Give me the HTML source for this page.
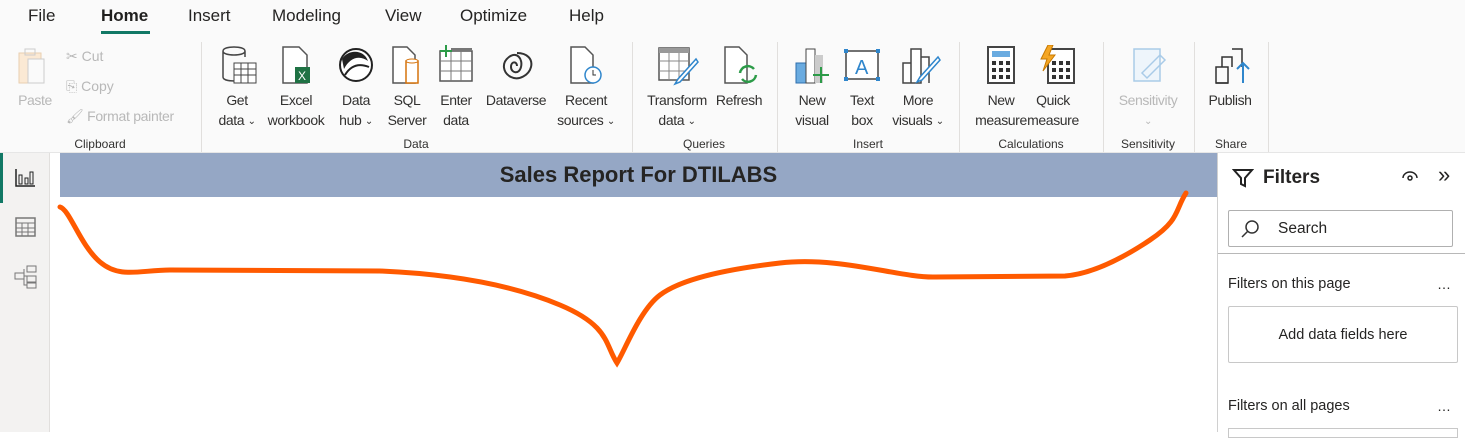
<!DOCTYPE html>
<html><head><meta charset="utf-8"><style>
*{margin:0;padding:0;box-sizing:border-box}
body{width:1465px;height:432px;overflow:hidden;background:#fff;font-family:"Liberation Sans",sans-serif;position:relative;color:#252423}
.ab{position:absolute}
.tab{position:absolute;top:6px;font-size:17px;color:#252423}
.lbl{position:absolute;top:90px;font-size:14px;letter-spacing:-0.4px;line-height:20px;text-align:center;color:#323130;white-space:nowrap;transform:translateX(-50%)}
.dis{color:#b8b8b8}
.grp{position:absolute;top:137px;font-size:12px;color:#323130;transform:translateX(-50%)}
.sep{position:absolute;top:42px;width:1px;height:110px;background:#e1dfdd}
svg.i{position:absolute;top:45px}
.cv{font-size:10px;vertical-align:1px}
</style></head><body>
<div class="ab" style="left:0;top:0;width:1465px;height:153px;background:#fafafa;border-bottom:1px solid #e6e6e6"></div>
<div class="tab" style="left:28px">File</div>
<div class="tab" style="left:101px;font-weight:bold;color:#201f1e">Home</div>
<div class="ab" style="left:101px;top:31px;width:49px;height:3px;background:#117865"></div>
<div class="tab" style="left:188px">Insert</div>
<div class="tab" style="left:272px">Modeling</div>
<div class="tab" style="left:385px">View</div>
<div class="tab" style="left:460px">Optimize</div>
<div class="tab" style="left:569px">Help</div>

<svg class="i" style="left:16px" width="42" height="42"><rect x="3" y="8" width="22" height="30" fill="#fbe9d4" stroke="#e8cfb0"/><rect x="12" y="14" width="16" height="24" fill="#fafafa" stroke="#ccc"/><rect x="9" y="4" width="10" height="6" fill="none" stroke="#ccc"/></svg>
<div class="ab dis" style="left:66px;top:48px;font-size:14px">✂ Cut</div>
<div class="ab dis" style="left:66px;top:78px;font-size:14px">⎘ Copy</div>
<div class="ab dis" style="left:66px;top:108px;font-size:14px;letter-spacing:-0.3px">🖌 Format painter</div>

<svg class="i" style="left:220px" width="40" height="42"><path d="M3 6v26c0 3 6 4 12 4M3 6c0-3 6-4 11-4s11 1 11 4v6M3 6c0 3 6 4 11 4s11-1 11-4" fill="none" stroke="#444" stroke-width="1.5"/><rect x="14" y="18" width="22" height="20" fill="#fff" stroke="#444"/><path d="M14 24h22M14 30h22M21 18v20M28 18v20" stroke="#444"/></svg>
<svg class="i" style="left:280px" width="40" height="42"><path d="M3 2h16l8 8v28H3z" fill="#fff" stroke="#555" stroke-width="1.5"/><rect x="15" y="22" width="15" height="16" fill="#1f7244"/><text x="18" y="35" fill="#fff" font-size="12" font-family="Liberation Sans">X</text></svg>
<svg class="i" style="left:337px" width="40" height="42"><circle cx="19" cy="20" r="16" fill="#fff" stroke="#222" stroke-width="2"/><path d="M5 14c6-10 22-10 26 2-8-6-18-4-24 8z" fill="#222"/><path d="M8 30c6-10 14-12 24-8" fill="none" stroke="#222" stroke-width="2"/></svg>
<svg class="i" style="left:390px" width="40" height="42"><path d="M3 2h14l8 8v28H3z" fill="#fff" stroke="#555" stroke-width="1.5"/><path d="M16 16h12v22h-12z" fill="#fff" stroke="#d5730c" stroke-width="1.5"/><ellipse cx="22" cy="16" rx="6" ry="2" fill="#fff" stroke="#d5730c"/></svg>
<svg class="i" style="left:437px" width="40" height="42"><rect x="3" y="6" width="32" height="30" fill="#fff" stroke="#555" stroke-width="1.5"/><rect x="14" y="3" width="21" height="3" fill="#777"/><path d="M3 16h32M3 26h32M14 6v30M24 6v30" stroke="#777"/><path d="M9 0v12M3 6h12" stroke="#2c9b48" stroke-width="2"/></svg>
<svg class="i" style="left:497px" width="40" height="42"><path d="M20 8c10 0 16 6 14 14s-12 14-20 10S4 18 12 12s14 2 12 10-10 6-10 0 6-6 6-1" fill="none" stroke="#333" stroke-width="2"/></svg>
<svg class="i" style="left:568px" width="40" height="42"><path d="M3 2h14l8 8v28H3z" fill="#fff" stroke="#555" stroke-width="1.5"/><circle cx="25" cy="30" r="8" fill="#fff" stroke="#2f86cc" stroke-width="1.5"/><path d="M25 25v5h3" stroke="#333" fill="none"/></svg>

<svg class="i" style="left:656px" width="44" height="42"><rect x="3" y="3" width="30" height="32" fill="#fff" stroke="#555" stroke-width="1.5"/><rect x="3" y="3" width="30" height="5" fill="#999"/><path d="M3 16h30M3 26h30M13 8v27M23 8v27" stroke="#888"/><path d="M40 14L22 34l-3 5 5-2 18-20z" fill="#fff" stroke="#2f86cc" stroke-width="1.5"/></svg>
<svg class="i" style="left:722px" width="40" height="42"><path d="M3 2h14l8 8v28H3z" fill="#fff" stroke="#555" stroke-width="1.5"/><path d="M18 28a8 8 0 0 1 14-4M34 30a8 8 0 0 1-14 4" fill="none" stroke="#2c9b48" stroke-width="2.5"/></svg>

<svg class="i" style="left:793px" width="40" height="42"><rect x="3" y="18" width="10" height="20" fill="#6aabe0" stroke="#2f6fad"/><rect x="13" y="4" width="9" height="34" fill="#fff" stroke="#444"/><rect x="22" y="10" width="8" height="28" fill="#ccc"/><path d="M28 22v16M20 30h16" stroke="#2c9b48" stroke-width="2"/></svg>
<svg class="i" style="left:843px" width="40" height="42"><rect x="3" y="6" width="32" height="28" fill="#fff" stroke="#444" stroke-width="1.5"/><text x="12" y="29" fill="#2f86cc" font-size="20" font-family="Liberation Sans">A</text><rect x="1" y="4" width="4" height="4" fill="#2f86cc"/><rect x="33" y="4" width="4" height="4" fill="#2f86cc"/><rect x="1" y="32" width="4" height="4" fill="#2f86cc"/><rect x="33" y="32" width="4" height="4" fill="#2f86cc"/></svg>
<svg class="i" style="left:900px" width="42" height="42"><path d="M3 18h8v20H3zM11 4h10v34H11zM21 12h8v26" fill="#fff" stroke="#444" stroke-width="1.5"/><path d="M38 12L20 32l-3 5 5-2 18-20z" fill="#fff" stroke="#2f86cc" stroke-width="1.5"/></svg>

<svg class="i" style="left:985px" width="34" height="42"><rect x="3" y="2" width="26" height="36" fill="#fff" stroke="#444" stroke-width="2"/><rect x="7" y="6" width="18" height="6" fill="#6aabe0"/><g fill="#333"><rect x="7" y="16" width="4" height="4"/><rect x="14" y="16" width="4" height="4"/><rect x="21" y="16" width="4" height="4"/><rect x="7" y="23" width="4" height="4"/><rect x="14" y="23" width="4" height="4"/><rect x="21" y="23" width="4" height="4"/><rect x="7" y="30" width="4" height="4"/><rect x="14" y="30" width="4" height="4"/><rect x="21" y="30" width="4" height="4"/></g></svg>
<svg class="i" style="left:1038px" width="40" height="42"><rect x="10" y="4" width="26" height="34" fill="#fff" stroke="#444" stroke-width="2"/><g fill="#333"><rect x="14" y="16" width="4" height="4"/><rect x="21" y="16" width="4" height="4"/><rect x="28" y="16" width="4" height="4"/><rect x="14" y="23" width="4" height="4"/><rect x="21" y="23" width="4" height="4"/><rect x="28" y="23" width="4" height="4"/><rect x="14" y="30" width="4" height="4"/><rect x="21" y="30" width="4" height="4"/><rect x="28" y="30" width="4" height="4"/></g><path d="M10 0L3 14h6L5 26l12-16h-6l4-10z" fill="#f5a623" stroke="#c77800"/></svg>
<svg class="i" style="left:1130px" width="40" height="42"><path d="M4 4h26v32H4z" fill="#eef5fb" stroke="#a9cbe8" stroke-width="1.5"/><path d="M12 28l18-18 5 5-18 18z" fill="none" stroke="#a9cbe8" stroke-width="1.5"/></svg>
<svg class="i" style="left:1213px" width="40" height="42"><path d="M3 22h12v16H3zM9 22V12h10v10M19 4h10v18" fill="none" stroke="#333" stroke-width="1.5"/><path d="M3 38h12" stroke="#333" stroke-width="1.5"/><path d="M30 38V18M24 24l6-6 6 6" fill="none" stroke="#2f86cc" stroke-width="2"/></svg>

<div class="lbl dis" style="left:35px">Paste</div>
<div class="lbl" style="left:237px">Get<br>data <span class="cv">⌄</span></div>
<div class="lbl" style="left:296px">Excel<br>workbook</div>
<div class="lbl" style="left:356px">Data<br>hub <span class="cv">⌄</span></div>
<div class="lbl" style="left:407px">SQL<br>Server</div>
<div class="lbl" style="left:456px">Enter<br>data</div>
<div class="lbl" style="left:516px">Dataverse</div>
<div class="lbl" style="left:586px">Recent<br>sources <span class="cv">⌄</span></div>
<div class="lbl" style="left:677px">Transform<br>data <span class="cv">⌄</span></div>
<div class="lbl" style="left:739px">Refresh</div>
<div class="lbl" style="left:812px">New<br>visual</div>
<div class="lbl" style="left:862px">Text<br>box</div>
<div class="lbl" style="left:918px">More<br>visuals <span class="cv">⌄</span></div>
<div class="lbl" style="left:1001px">New<br>measure</div>
<div class="lbl" style="left:1053px">Quick<br>measure</div>
<div class="lbl dis" style="left:1148px">Sensitivity<br><span class="cv">⌄</span></div>
<div class="lbl" style="left:1230px">Publish</div>

<div class="grp" style="left:100px">Clipboard</div>
<div class="grp" style="left:416px">Data</div>
<div class="grp" style="left:704px">Queries</div>
<div class="grp" style="left:868px">Insert</div>
<div class="grp" style="left:1031px">Calculations</div>
<div class="grp" style="left:1148px">Sensitivity</div>
<div class="grp" style="left:1231px">Share</div>
<div class="sep" style="left:201px"></div><div class="sep" style="left:632px"></div><div class="sep" style="left:777px"></div><div class="sep" style="left:959px"></div><div class="sep" style="left:1103px"></div><div class="sep" style="left:1194px"></div><div class="sep" style="left:1268px"></div>

<div class="ab" style="left:0;top:153px;width:50px;height:279px;background:#f3f2f1;border-right:1px solid #e1dfdd"></div>
<div class="ab" style="left:0;top:153px;width:3px;height:50px;background:#117865"></div>
<svg class="ab" style="left:15px;top:168px" width="22" height="20"><path d="M1 1v17h19" fill="none" stroke="#222" stroke-width="1.5"/><rect x="4" y="7" width="3" height="9" fill="none" stroke="#222"/><rect x="10" y="10" width="3" height="6" fill="none" stroke="#222"/><rect x="15" y="4" width="3" height="12" fill="none" stroke="#222"/></svg>
<svg class="ab" style="left:15px;top:217px" width="22" height="20"><rect x="1" y="1" width="19" height="18" fill="none" stroke="#777" stroke-width="1.5"/><path d="M1 6h19M1 11h19M1 15h19M7 6v13M13 6v13" stroke="#777"/></svg>
<svg class="ab" style="left:14px;top:265px" width="24" height="24"><rect x="13" y="1" width="9" height="6" fill="none" stroke="#777"/><rect x="1" y="8" width="9" height="6" fill="none" stroke="#777"/><rect x="13" y="11" width="9" height="6" fill="none" stroke="#777"/><rect x="13" y="18" width="9" height="5" fill="none" stroke="#777"/><path d="M10 11h3M10 4v16h3" fill="none" stroke="#777"/></svg>

<div class="ab" style="left:60px;top:153px;width:1157px;height:44px;background:#95a7c5;font-weight:bold;font-size:22px;color:#252423;text-align:center;line-height:44px">Sales Report For DTILABS</div>

<svg class="ab" style="left:0;top:0" width="1217" height="432"><path d="M60 207C70 210 80 245 100 262S140 270 170 270L380 271C450 274 510 284 560 305S605 345 617 363C625 350 640 310 660 295S720 270 780 263S900 278 935 277L1065 276C1090 274 1120 260 1150 240S1175 210 1186 193" fill="none" stroke="#ff5a00" stroke-width="5" stroke-linecap="round"/></svg>

<div class="ab" style="left:1217px;top:153px;width:248px;height:279px;border-left:1px solid #d0d0d0;background:#fff"></div>
<svg class="ab" style="left:1232px;top:167px" width="22" height="22"><path d="M2 3h18l-7 8v8l-4-2v-6z" fill="none" stroke="#222" stroke-width="2"/></svg>
<div class="ab" style="left:1263px;top:167px;font-size:19px;font-weight:bold">Filters</div>
<svg class="ab" style="left:1401px;top:170px" width="18" height="14"><path d="M2 8a7 6 0 0 1 14 0" fill="none" stroke="#222" stroke-width="1.5"/><circle cx="9" cy="8" r="2" fill="none" stroke="#222" stroke-width="1.5"/></svg>
<div class="ab" style="left:1438px;top:162px;font-size:22px">»</div>
<div class="ab" style="left:1228px;top:210px;width:225px;height:37px;border:1px solid #b0b0b0;border-radius:2px"></div>
<svg class="ab" style="left:1240px;top:219px" width="20" height="20"><circle cx="12" cy="8" r="6" fill="none" stroke="#333" stroke-width="1.5"/><path d="M8 12l-6 6" stroke="#333" stroke-width="1.5"/></svg>
<div class="ab" style="left:1278px;top:220px;font-size:15.5px">Search</div>
<div class="ab" style="left:1218px;top:253px;width:247px;height:1px;background:#b8b8b8"></div>
<div class="ab" style="left:1228px;top:276px;font-size:14.5px">Filters on this page</div>
<div class="ab" style="left:1437px;top:276px;font-size:14px">…</div>
<div class="ab" style="left:1228px;top:306px;width:230px;height:57px;border:1px solid #c8c8c8;border-radius:2px;text-align:center;line-height:57px;font-size:14.5px">Add data fields here</div>
<div class="ab" style="left:1228px;top:398px;font-size:14.5px">Filters on all pages</div>
<div class="ab" style="left:1437px;top:398px;font-size:14px">…</div>
<div class="ab" style="left:1228px;top:428px;width:230px;height:10px;border:1px solid #c8c8c8"></div>
</body></html>
